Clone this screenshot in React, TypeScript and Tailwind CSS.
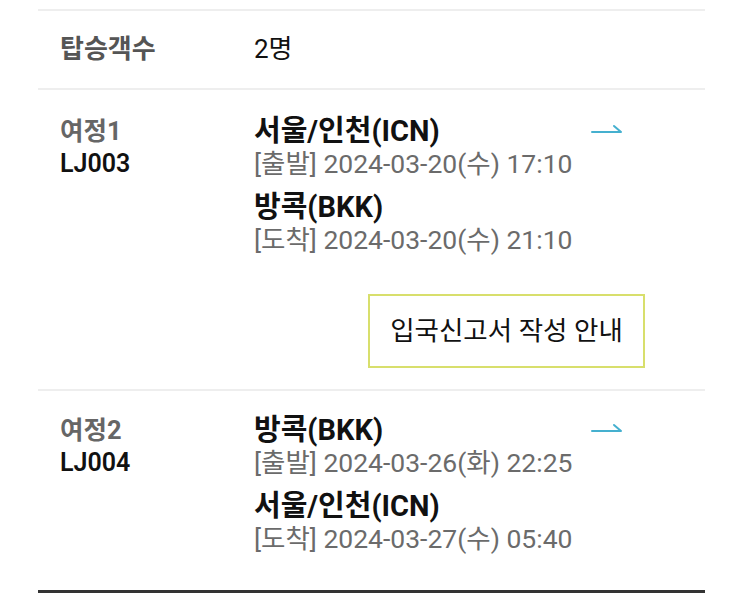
import React from "react";

function Harpoon() {
  return (
    <svg width="32" height="14" viewBox="0 0 32 14" fill="none" className="mt-[7px] shrink-0">
      <path d="M1 11 H30 L23 5" stroke="#45b0cf" strokeWidth="2" strokeLinecap="round" strokeLinejoin="round" />
    </svg>
  );
}

type Leg = { city: string; kind: string; when: string };

function Journey({ no, flight, legs }: { no: string; flight: string; legs: Leg[] }) {
  return (
    <div className="flex pl-[22px] pr-[82px]">
      <div className="w-[194px] shrink-0">
        <div className="text-[25.5px] leading-[34px] font-bold text-[#666]">{no}</div>
        <div className="text-[25px] leading-[32px] font-semibold text-[#111]">{flight}</div>
      </div>
      <div className="flex-1">
        {legs.map((l, i) => (
          <div key={i} className={i > 0 ? "mt-[10px]" : ""}>
            <div className="text-[29px] leading-[34px] font-bold text-[#111]">{l.city}</div>
            <div className="text-[26.5px] leading-[32px] text-[#6b6b6b]">
              [{l.kind}] {l.when}
            </div>
          </div>
        ))}
      </div>
      <Harpoon />
    </div>
  );
}

export default function App() {
  return (
    <div className="w-[743px] h-[605px] bg-white" style={{ fontFamily: "Roboto, 'Noto Sans CJK KR', sans-serif" }}>
      <div className="mx-[38px] pt-[9px]">
        <div className="border-t-2 border-[#eeeeee]" />
        <div className="flex items-center h-[77px] pl-[22px]">
          <div className="w-[194px] text-[26px] font-bold text-[#555]">탑승객수</div>
          <div className="text-[26px] text-[#111]">2명</div>
        </div>
        <div className="border-t-2 border-[#eeeeee]" />
        <div className="pt-[24px] pb-[21px]">
          <Journey
            no="여정1"
            flight="LJ003"
            legs={[
              { city: "서울/인천(ICN)", kind: "출발", when: "2024-03-20(수) 17:10" },
              { city: "방콕(BKK)", kind: "도착", when: "2024-03-20(수) 21:10" },
            ]}
          />
          <div className="flex justify-end pr-[60px] mt-[38px]">
            <button className="w-[277px] h-[74px] border-2 border-[#d8df6c] text-[26.5px] text-[#111] bg-white">
              입국신고서 작성 안내
            </button>
          </div>
        </div>
        <div className="border-t-2 border-[#eeeeee]" />
        <div className="pt-[22px] pb-[35px]">
          <Journey
            no="여정2"
            flight="LJ004"
            legs={[
              { city: "방콕(BKK)", kind: "출발", when: "2024-03-26(화) 22:25" },
              { city: "서울/인천(ICN)", kind: "도착", when: "2024-03-27(수) 05:40" },
            ]}
          />
        </div>
        <div className="border-t-[3px] border-[#333]" />
      </div>
    </div>
  );
}
